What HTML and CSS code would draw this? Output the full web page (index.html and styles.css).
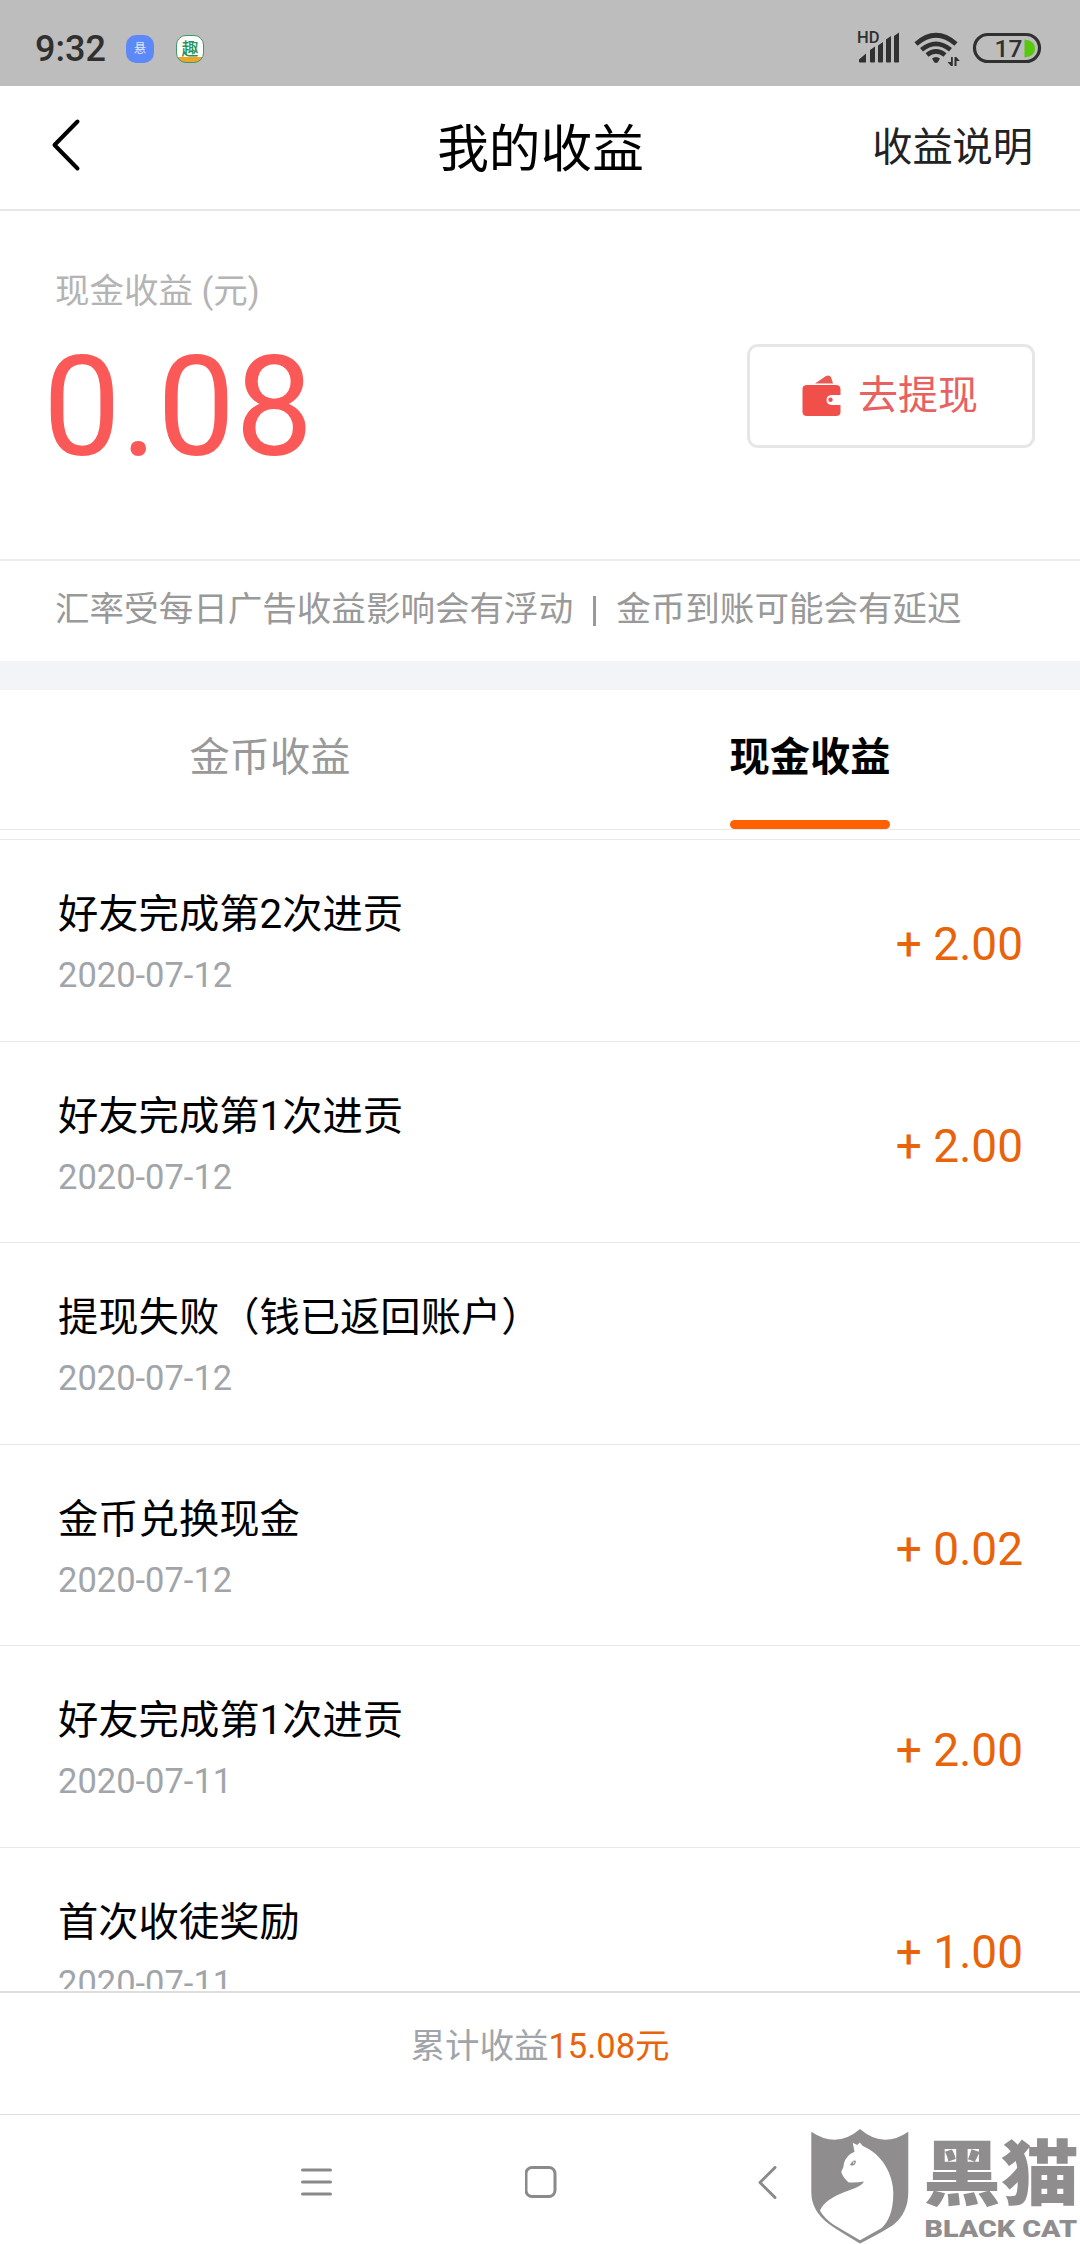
FILE: index.html
```html
<!DOCTYPE html>
<html lang="zh-CN">
<head>
<meta charset="utf-8">
<title>我的收益</title>
<link rel="stylesheet" href="styles.css">
</head>
<body>
<div class="screen">
  <div class="status">
    <span class="clock">9:32</span>
    <span class="app app-blue">悬</span>
    <span class="app app-green">趣</span>
    <svg class="sys" width="190" height="48" viewBox="0 0 190 48">
      <text class="hd" x="5" y="18">HD</text>
      <g fill="#303030">
        <path d="M7 37v-2.500l7-6v9H8q-1 0-1-1z"/>
        <path d="M18 25l5-3.500v15q0 1-1 1h-3q-1 0-1-1z"/>
        <path d="M26 20.500l5-3.500v19.500q0 1-1 1h-3q-1 0-1-1z"/>
        <path d="M34 14.500l5-3.500v25.500q0 1-1 1h-3q-1 0-1-1z"/>
        <path d="M42 11l5-3.500v29q0 1-1 1h-3q-1 0-1-1z"/>
        <path d="M80 33.500q4-3 8 0l-2 3.500q-2 2-4 0z"/>
        <path d="M99 32h1.800v9H99l-3.500-4H99zM102.500 41v-9h1.800l3.500 4h-3.300v5z"/>
      </g>
      <g fill="none" stroke="#303030" stroke-width="4.600">
        <path d="M64 19Q84 1.500 104 19"/>
        <path d="M69.500 24.800Q84 12.800 98.500 24.800"/>
        <path d="M75 30Q84 22.800 93 30"/>
      </g>
      <rect x="122.500" y="9.500" width="65" height="27" rx="13.500" fill="none" stroke="#303030" stroke-width="3.200"/>
      <path d="M172.500 14.500q10.500 1 10.500 9t-10.500 9z" fill="#57c70f"/>
      <text class="level" x="142.500" y="31.500">17</text>
    </svg>
  </div>
  <header class="nav">
    <svg class="back" width="40" height="60" viewBox="0 0 40 60"><path d="M29.500 6.500L6.500 30l23 23.500" fill="none" stroke="#000" stroke-width="4" stroke-linecap="round" stroke-linejoin="round"/></svg>
    <h1 class="title">我的收益</h1>
    <span class="help">收益说明</span>
  </header>
  <section class="balance">
    <div class="sum">
      <div class="label">现金收益 (元)</div>
      <div class="value">0.08</div>
    </div>
    <div class="withdraw">
      <svg width="40" height="42" viewBox="0 0 40 42"><path d="M13 8.500L24 1q3-1.500 5 1l2 6.500z" fill="#e85a54"/><path d="M5 10h29q4.500 0 4.500 4.500V20h-8q-6 0-6 5t6 5h8v7q0 4-4.500 4H5q-4.500 0-4.500-4V14q0-4 4.500-4z" fill="#f04f4a"/><circle cx="28.500" cy="24.800" r="2.200" fill="#f04f4a"/></svg>
      <span>去提现</span>
    </div>
  </section>
  <p class="notice"><span>汇率受每日广告收益影响会有浮动</span><i class="bar"></i><span>金币到账可能会有延迟</span></p>
  <div class="tabs">
    <div class="tab">金币收益</div>
    <div class="tab active"><span>现金收益</span></div>
  </div>
  <ul class="list">
    <li class="row"><div><div class="name">好友完成第2次进贡</div><div class="date">2020-07-12</div></div><span class="amount">+ 2.00</span></li>
    <li class="row"><div><div class="name">好友完成第1次进贡</div><div class="date">2020-07-12</div></div><span class="amount">+ 2.00</span></li>
    <li class="row"><div><div class="name">提现失败（钱已返回账户）</div><div class="date">2020-07-12</div></div></li>
    <li class="row"><div><div class="name">金币兑换现金</div><div class="date">2020-07-12</div></div><span class="amount">+ 0.02</span></li>
    <li class="row"><div><div class="name">好友完成第1次进贡</div><div class="date">2020-07-11</div></div><span class="amount">+ 2.00</span></li>
    <li class="row"><div><div class="name">首次收徒奖励</div><div class="date">2020-07-11</div></div><span class="amount">+ 1.00</span></li>
  </ul>
  <div class="total">累计收益<b>15.08元</b></div>
  <div class="keys">
    <svg width="34" height="34" viewBox="0 0 34 34"><path d="M3.500 4h28M3.500 16h28M3.500 28h28" stroke="#8a8a8a" stroke-width="3" stroke-linecap="round"/></svg>
    <svg width="34" height="34" viewBox="0 0 34 34"><rect x="1" y="1.500" width="29" height="29" rx="6" fill="none" stroke="#8a8a8a" stroke-width="3"/></svg>
    <svg width="34" height="34" viewBox="0 0 34 34"><path d="M25 1.500L10 16.500l15 15" fill="none" stroke="#8a8a8a" stroke-width="3" stroke-linecap="round" stroke-linejoin="round"/></svg>
  </div>
  <svg class="mark" width="272" height="120" viewBox="0 0 272 120">
    <path d="M3.300 7.700Q29 25 52 5Q75 25 100.300 7.700V68q0 20-14 32-6 5-34.300 19.500-22-13-31-19.500Q3.300 87 3.300 68z" fill="#8f8d8e"/>
    <path d="M44.700 18.700l4.500 2.300 2.600-2.500 3 3.500C74 30 85.300 50 85.300 69.300c0 18-5 29-12 35L52 116.300 26 101Q16 94 12 86.700 16 75 42 66q12-4 14-8.500-9 1.500-15.700.800Q34 52 33.300 47.700 36 43 36 39.300q2-8 10.500-11.600z" fill="#fff"/>
    <path d="M42 41q3-6 6-4-1 6-6 4z" fill="#8f8d8e"/>
    <path d="M45 37.500l1.500.5-1 2.500z" fill="#fff"/>
    <text class="cn" x="115" y="75" textLength="156" lengthAdjust="spacingAndGlyphs">黑猫</text>
    <text class="en" x="116.500" y="112.500" textLength="152.500" lengthAdjust="spacingAndGlyphs">BLACK CAT</text>
  </svg>
</div>
</body>
</html>
```
FILE: styles.css
```css
* { box-sizing: border-box; }
body { margin: 0; font-family: Roboto, "Noto Sans CJK SC", sans-serif; background: #fff; color: #000; }
.screen { position: relative; width: 1080px; height: 2244px; overflow: hidden; display: flex; flex-direction: column; }
.screen > * { flex: none; }

.status { height: 86px; background: #bdbdbd; display: flex; align-items: center; padding: 11px 38px 0 35px; }
.clock { font-size: 36px; font-weight: 500; line-height: 48px; width: 91px; color: #303030; }
.app { width: 28px; height: 28px; border-radius: 10px; text-align: center; }
.app-blue { background: #5d89f8; color: #dfe8ff; font-size: 12px; line-height: 28px; }
.app-green { margin-left: 22px; background: linear-gradient(#fff 82%, #eda62b 82%); border: 1px solid #3c9b66; color: #27945a; font-size: 17px; line-height: 26px; font-weight: 500; }
.sys { margin-left: auto; }
.hd { font-size: 16.500px; font-weight: 500; fill: #303030; }
.level { font-size: 24.500px; font-weight: 500; fill: #303030; }

.nav { height: 125px; border-bottom: 2px solid #e8e8e8; display: grid; grid-template-columns: 1fr auto 1fr; align-items: center; padding: 0 47px 0 48px; }
.back { margin-top: -6px; }
.title { margin: 4px 0 0; font-size: 51.700px; font-weight: 400; line-height: 70px; }
.help { justify-self: end; font-size: 40.200px; line-height: 60px; color: #222; }

.balance { height: 350px; border-bottom: 2px solid #ececec; display: flex; justify-content: space-between; padding: 56px 45px 0 55px; }
.label { font-size: 34.500px; line-height: 48px; color: #b4b4b4; }
.value { margin: 13px 0 0 -12px; font-size: 138.500px; line-height: 160px; color: #fb5858; }
.withdraw { width: 288px; height: 104px; margin-top: 77px; border: 3px solid #e6e6e6; border-radius: 11px; display: flex; align-items: center; padding-left: 52px; gap: 16px; font-size: 40px; line-height: 60px; color: #e86060; }

.notice { margin: 0; height: 129px; border-bottom: 29px solid #f3f4f7; display: flex; align-items: center; padding: 0 0 4px 55px; font-size: 34.550px; line-height: 60px; color: #999; }
.bar { width: 3px; height: 30px; margin: 4px 20px 0 20px; background: #999; }

.tabs { height: 140px; border-bottom: 1px solid #e8e8e8; display: flex; }
.tab { flex: 1; display: flex; justify-content: center; font-size: 40.200px; line-height: 136px; color: #999; }
.active { color: #000; font-weight: 700; }
.active span { display: flex; flex-direction: column; height: 139px; }
.active span::after { content: ""; height: 9px; margin-top: -6px; border-radius: 4.500px; background: #ff6000; }

.list { margin: 9px 0 0; padding: 0; list-style: none; height: 1150px; overflow: hidden; }
.row { height: 201.600px; border-top: 1px solid #e8e8e8; display: flex; justify-content: space-between; padding: 45px 57px 0 58px; }
.name { font-size: 40.300px; line-height: 60px; }
.date { font-size: 34.500px; line-height: 40px; margin-top: 10px; color: #a1a5aa; }
.amount { font-size: 46px; line-height: 60px; margin-top: 29px; color: #e8630a; }

.total { margin-top: 2px; height: 123px; border-top: 2px solid #dedede; text-align: center; font-size: 34.500px; line-height: 106px; color: #a1a5aa; }
.total b { font-weight: 400; color: #e8630a; }
.keys { height: 130px; border-top: 1px solid #dedede; display: flex; justify-content: space-between; align-items: center; padding: 6px 296px 0 299px; }
.mark { position: absolute; right: 0; bottom: 0; }
.mark text { fill: #8f8d8e; }
.cn { font: 900 71px "Noto Sans CJK SC", sans-serif; }
.en { font: 900 24px Roboto, sans-serif; }
```
